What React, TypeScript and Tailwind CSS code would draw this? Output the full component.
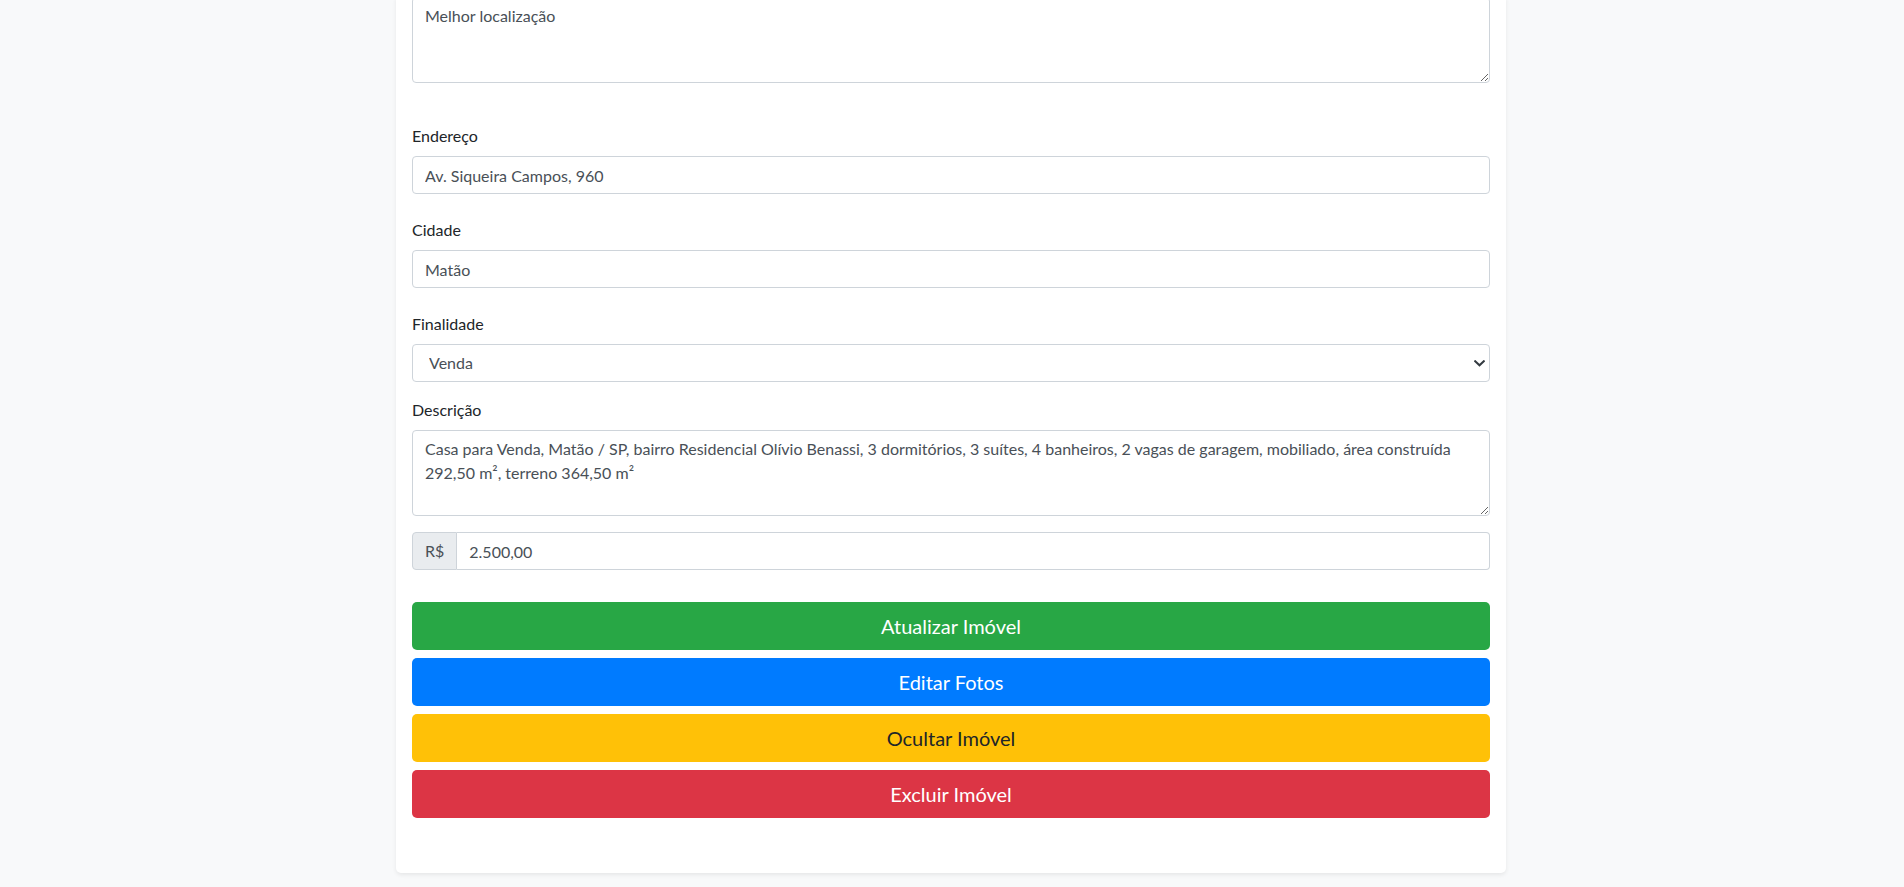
import React from "react";

const font = "font-['Lato','Segoe_UI',sans-serif]";

function Label({ children, className = "" }: { children: React.ReactNode; className?: string }) {
  return <label className={`block text-[16px] leading-[24px] text-[#212529] mb-[8px] ${className}`}>{children}</label>;
}

const inputCls =
  "block w-full h-[38px] px-[12px] py-[6px] text-[16px] leading-[24px] text-[#495057] bg-white border border-[#ced4da] rounded-[4px] outline-none";

const textareaCls =
  "block w-full h-[86px] px-[12px] py-[6px] text-[16px] leading-[24px] text-[#495057] bg-white border border-[#ced4da] rounded-[4px] outline-none whitespace-pre-wrap";

const btnCls =
  "block w-full h-[48px] rounded-[5px] text-[20px] leading-[30px] text-center";

export default function App() {
  return (
    <div className={`min-h-[887px] bg-[#f8f9fa] ${font} overflow-hidden pr-[2px]`}>
      <div className="w-[1110px] mx-auto bg-white rounded-b-[5px] shadow-[0_2px_4px_rgba(0,0,0,0.075)] px-[16px] pb-[55px]">
        <textarea
          className={`${textareaCls} -mt-[3px]`}
          defaultValue="Melhor localização"
        />
        <div className="mt-[41px]">
          <Label>Endereço</Label>
          <input className={inputCls} defaultValue="Av. Siqueira Campos, 960" />
        </div>
        <div className="mt-[24px]">
          <Label>Cidade</Label>
          <input className={inputCls} defaultValue="Matão" />
        </div>
        <div className="mt-[24px]">
          <Label>Finalidade</Label>
          <div className="relative">
            <select className={`${inputCls} appearance-none pl-[16px]`} defaultValue="Venda">
              <option>Venda</option>
              <option>Aluguel</option>
            </select>
            <svg
              className="absolute right-[5px] top-[16px] pointer-events-none"
              width="11"
              height="7"
              viewBox="0 0 11 7"
              fill="none"
            >
              <path d="M1.2 1.2 L5.5 5.3 L9.8 1.2" stroke="#333a40" strokeWidth="2" strokeLinecap="square" />
            </svg>
          </div>
        </div>
        <div className="mt-[16px]">
          <Label>Descrição</Label>
          <textarea
            className={textareaCls}
            defaultValue={
              "Casa para Venda, Matão / SP, bairro Residencial Olívio Benassi, 3 dormitórios, 3 suítes, 4 banheiros, 2 vagas de garagem, mobiliado, área construída\n292,50 m², terreno 364,50 m²"
            }
          />
        </div>
        <div className="mt-[16px] flex h-[38px]">
          <span className="flex items-center px-[12px] text-[16px] leading-[24px] text-[#495057] bg-[#e9ecef] border border-[#ced4da] rounded-l-[4px]">
            R$
          </span>
          <input
            className="flex-1 min-w-0 h-[38px] px-[12px] py-[6px] text-[16px] leading-[24px] text-[#495057] bg-white border border-l-0 border-[#ced4da] rounded-r-[4px] outline-none"
            defaultValue="2.500,00"
          />
        </div>
        <div className="mt-[32px] flex flex-col gap-[8px]">
          <button className={`${btnCls} bg-[#28a745] text-white`}>Atualizar Imóvel</button>
          <button className={`${btnCls} bg-[#007bff] text-white`}>Editar Fotos</button>
          <button className={`${btnCls} bg-[#ffc107] text-[#212529]`}>Ocultar Imóvel</button>
          <button className={`${btnCls} bg-[#dc3545] text-white`}>Excluir Imóvel</button>
        </div>
      </div>
    </div>
  );
}
